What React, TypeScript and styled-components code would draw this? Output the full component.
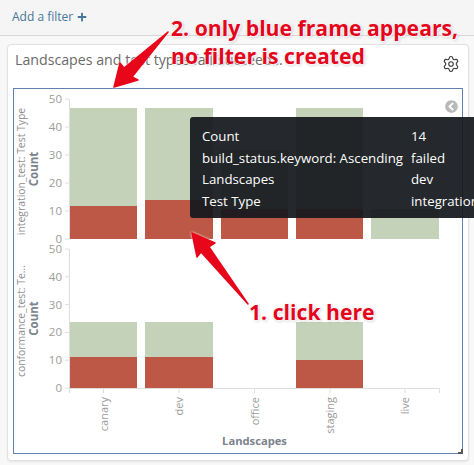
import React from "react";
import styled, { createGlobalStyle } from "styled-components";
import { Settings } from "lucide-react";
import { FaPlus, FaChevronCircleLeft } from "react-icons/fa";

const GlobalStyle = createGlobalStyle`
  html, body {
    margin: 0;
    padding: 0;
    width: 474px;
    height: 465px;
    overflow: hidden;
    background: #f8f8f8;
    font-family: "Open Sans", "DejaVu Sans", sans-serif;
  }
`;

const Page = styled.div`
  position: relative;
  width: 474px;
  height: 465px;
  overflow: hidden;
`;

const FilterBar = styled.div`
  display: flex;
  align-items: center;
  gap: 4px;
  box-sizing: border-box;
  height: 36px;
  padding: 0 12px 2px;
  background: #f5f5f5;
  border-bottom: 1px solid #d8d8d8;
  color: #46779a;
  font-size: 12px;
`;

const Panel = styled.div`
  box-sizing: border-box;
  width: 462px;
  height: 417px;
  margin: 8px 0 0 7px;
  padding: 0 5px;
  background: #fff;
  border: 1px solid #e2e2e2;
  border-radius: 4px;
  box-shadow: 0 1px 2px rgba(0, 0, 0, 0.08);
`;

const PanelHeader = styled.div`
  display: flex;
  align-items: center;
  justify-content: space-between;
  box-sizing: border-box;
  height: 43px;
  padding: 0 3px 14px 2px;
  color: #6a6a6a;
  font-size: 14.2px;
  svg {
    color: #3a3a3a;
    margin-top: 8px;
  }
`;

const Frame = styled.div`
  position: relative;
  box-sizing: border-box;
  width: 450px;
  height: 366px;
  border: 1px solid #6180b4;
  svg.chart {
    display: block;
  }
`;

const Collapse = styled.div`
  position: absolute;
  top: 11px;
  right: 4px;
  color: #b9b9b9;
  line-height: 0;
`;

const ResizeHandle = styled.div`
  position: absolute;
  right: -1px;
  bottom: -1px;
  width: 5px;
  height: 5px;
  border-right: 2px solid #555;
  border-bottom: 2px solid #555;
  box-sizing: border-box;
`;

const Tooltip = styled.div`
  position: absolute;
  left: 176px;
  top: 28px;
  display: grid;
  grid-template-columns: 209px 100px;
  grid-auto-rows: 21.8px;
  align-items: center;
  padding: 8px 0 6px 12px;
  background: rgba(20, 24, 28, 0.93);
  border-radius: 3px;
  color: #fff;
  font-size: 13.25px;
  white-space: nowrap;
`;

const Callout = styled.div<{ $left: number; $top: number }>`
  position: absolute;
  left: ${(p) => p.$left}px;
  top: ${(p) => p.$top}px;
  color: #e4061c;
  font-size: 21.2px;
  font-weight: 700;
  line-height: 28px;
  white-space: nowrap;
  text-shadow: 0 0 2px #fff, 0 0 2px #fff, 1px 1px 2px #fff, 1px 1px 3px rgba(0, 0, 0, 0.35);
`;

const Arrows = styled.svg`
  position: absolute;
  left: 0;
  top: 0;
  pointer-events: none;
  filter: drop-shadow(0 0 1px #fff);
  polygon {
    fill: #e8061a;
    stroke: #e8061a;
    stroke-width: 1.5;
    stroke-linejoin: round;
  }
`;

type Bar = { x: number; w: number; top?: number; red?: number };

const plots: { top: number; base: number; label: string; bars: Bar[] }[] = [
  {
    top: 99,
    base: 239,
    label: "integration_test: Test Type",
    bars: [
      { x: 70, w: 67, top: 108, red: 206 },
      { x: 145, w: 68, top: 108, red: 200 },
      { x: 221, w: 67, top: 150, red: 209 },
      { x: 296, w: 67, top: 108, red: 209 },
      { x: 371, w: 68, top: 209 },
    ],
  },
  {
    top: 249,
    base: 388,
    label: "conformance_test: Te...",
    bars: [
      { x: 70, w: 67, top: 322, red: 357 },
      { x: 145, w: 68, top: 322, red: 357 },
      { x: 296, w: 67, top: 322, red: 360 },
    ],
  },
];

const categories = [
  { name: "canary", x: 103.5 },
  { name: "dev", x: 179 },
  { name: "office", x: 254.5 },
  { name: "staging", x: 330 },
  { name: "live", x: 405 },
];

const GREEN = "#c4d2ba";
const RED = "#bd5846";
const AXIS = "#dedede";
const TICK_TEXT = "#9b9b9b";

function Plot({ plot }: { plot: (typeof plots)[number] }) {
  const step = (plot.base - plot.top) / 5;
  const mid = (plot.top + plot.base) / 2;
  return (
    <g>
      {plot.bars.map((b) => (
        <g key={b.x}>
          <rect x={b.x} y={b.top} width={b.w} height={plot.base - (b.top ?? 0)} fill={GREEN} />
          {b.red && <rect x={b.x} y={b.red} width={b.w} height={plot.base - b.red} fill={RED} />}
        </g>
      ))}
      <line x1={69.5} x2={69.5} y1={plot.top} y2={plot.base} stroke={AXIS} />
      {[0, 1, 2, 3, 4, 5].map((i) => {
        const y = plot.base - i * step;
        return (
          <g key={i}>
            <line x1={65} x2={69} y1={y} y2={y} stroke={AXIS} />
            <text x={62} y={y + 4} textAnchor="end" fontSize={11.5} fill={TICK_TEXT}>
              {i * 10}
            </text>
          </g>
        );
      })}
      <text
        transform={`translate(25 ${mid + 2.5}) rotate(-90)`}
        textAnchor="middle"
        fontSize={10.4}
        fill="#8f8f8f"
      >
        {plot.label}
      </text>
      <text
        transform={`translate(38 ${mid}) rotate(-90)`}
        textAnchor="middle"
        fontSize={11.5}
        fontWeight={700}
        fill="#7b838c"
      >
        Count
      </text>
    </g>
  );
}

function Chart() {
  return (
    <svg className="chart" width={448} height={364} viewBox="14 89 448 364">
      {plots.map((p) => (
        <Plot key={p.label} plot={p} />
      ))}
      <line x1={69} x2={439.5} y1={388.5} y2={388.5} stroke={AXIS} />
      <line x1={69.5} x2={69.5} y1={388} y2={393} stroke={AXIS} />
      <line x1={439.5} x2={439.5} y1={388} y2={393} stroke={AXIS} />
      {categories.map((c) => (
        <g key={c.name}>
          <line x1={c.x} x2={c.x} y1={388} y2={393} stroke={AXIS} />
          <text
            transform={`translate(${c.x + 4} 397) rotate(-90)`}
            textAnchor="end"
            fontSize={11}
            fill={TICK_TEXT}
          >
            {c.name}
          </text>
        </g>
      ))}
      <text x={254.5} y={445} textAnchor="middle" fontSize={11.2} fontWeight={700} fill="#7b838c">
        Landscapes
      </text>
    </svg>
  );
}

export default function App() {
  return (
    <Page>
      <GlobalStyle />
      <FilterBar>
        Add a filter <FaPlus size={10} />
      </FilterBar>
      <Panel>
        <PanelHeader>
          <span>Landscapes and test types fail/succeed...</span>
          <Settings size={18} strokeWidth={1.5} />
        </PanelHeader>
        <Frame>
          <Chart />
          <Collapse>
            <FaChevronCircleLeft size={13} />
          </Collapse>
          <Tooltip>
            <span>Count</span>
            <span>14</span>
            <span>build_status.keyword: Ascending</span>
            <span>failed</span>
            <span>Landscapes</span>
            <span>dev</span>
            <span>Test Type</span>
            <span>integration</span>
          </Tooltip>
          <ResizeHandle />
        </Frame>
      </Panel>
      <Arrows width={474} height={465} viewBox="0 0 474 465">
        <polygon points="114,87 120,63 124,68 168,32 132,77 138,80" />
        <polygon points="192,233 215,243 209,247 248,304 201,252 197,257" />
      </Arrows>
      <Callout $left={171} $top={14}>
        2. only blue frame appears,
        <br />
        no filter is created
      </Callout>
      <Callout $left={249} $top={298}>
        1. click here
      </Callout>
    </Page>
  );
}
